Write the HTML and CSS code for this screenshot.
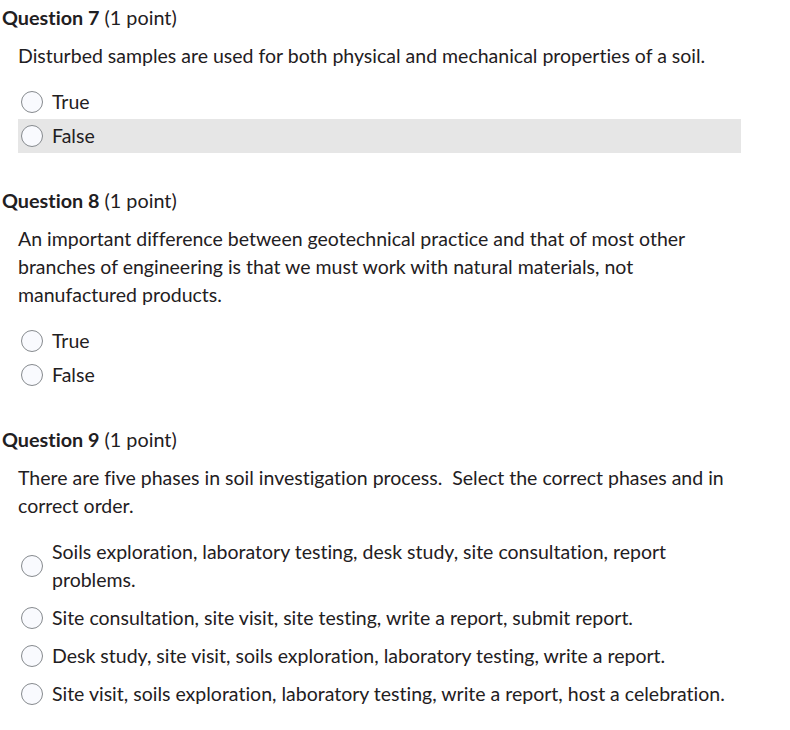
FILE: index.html
```html
<!DOCTYPE html>
<html lang="en">
<head>
<meta charset="utf-8">
<title>Quiz</title>
<link rel="stylesheet" href="styles.css">
</head>
<body>
<main class="quiz">
  <section class="question">
    <h2 class="q-title"><strong>Question 7</strong> (1 point)</h2>
    <div class="q-body">
      <p class="q-text">Disturbed samples are used for both physical and mechanical properties of a soil.</p>
      <ul class="options">
        <li class="option"><span class="radio"></span><span class="opt-text">True</span></li>
        <li class="option option-hover"><span class="radio"></span><span class="opt-text">False</span></li>
      </ul>
    </div>
  </section>
  <section class="question">
    <h2 class="q-title"><strong>Question 8</strong> (1 point)</h2>
    <div class="q-body">
      <p class="q-text">An important difference between geotechnical practice and that of most other branches of engineering is that we must work with natural materials, not manufactured products.</p>
      <ul class="options">
        <li class="option"><span class="radio"></span><span class="opt-text">True</span></li>
        <li class="option"><span class="radio"></span><span class="opt-text">False</span></li>
      </ul>
    </div>
  </section>
  <section class="question">
    <h2 class="q-title"><strong>Question 9</strong> (1 point)</h2>
    <div class="q-body">
      <p class="q-text">There are five phases in soil investigation process.&nbsp; Select the correct phases and in correct order.</p>
      <ul class="options options-loose">
        <li class="option"><span class="radio"></span><span class="opt-text">Soils exploration, laboratory testing, desk study, site consultation, report problems.</span></li>
        <li class="option"><span class="radio"></span><span class="opt-text">Site consultation, site visit, site testing, write a report, submit report.</span></li>
        <li class="option"><span class="radio"></span><span class="opt-text">Desk study, site visit, soils exploration, laboratory testing, write a report.</span></li>
        <li class="option"><span class="radio"></span><span class="opt-text">Site visit, soils exploration, laboratory testing, write a report, host a celebration.</span></li>
      </ul>
    </div>
  </section>
</main>
</body>
</html>
```

FILE: styles.css
```css
html, body {
  margin: 0;
  padding: 0;
  background: #ffffff;
}

body {
  font-family: Lato, "Liberation Sans", sans-serif;
  color: #1f2022;
  font-variant-ligatures: none;
}

.quiz {
  padding: 3px 0 0 2px;
  display: flex;
  flex-direction: column;
  gap: 33px;
}

.q-title {
  margin: 0;
  font-size: 19.8px;
  line-height: 28px;
  font-weight: 400;
}

.q-title strong {
  font-weight: 700;
}

.q-body {
  padding-left: 16px;
  width: 723px;
}

.q-text {
  margin: 11px 0 15px;
  font-size: 19.5px;
  line-height: 28px;
}

.options {
  list-style: none;
  margin: 0;
  padding: 0;
}

.options-loose {
  margin-top: -2px;
}

.option {
  display: flex;
  align-items: center;
  gap: 9px;
  padding: 3px;
  font-size: 19.5px;
  line-height: 28px;
}

.options-loose .option {
  padding: 5px 3px;
}

.option-hover {
  background: #e6e6e6;
}

.radio {
  flex: none;
  width: 20px;
  height: 20px;
  border: 1.2px solid #868a8e;
  border-radius: 50%;
  background: #f9fafe;
}

.opt-text {
  flex: 1;
}
```
